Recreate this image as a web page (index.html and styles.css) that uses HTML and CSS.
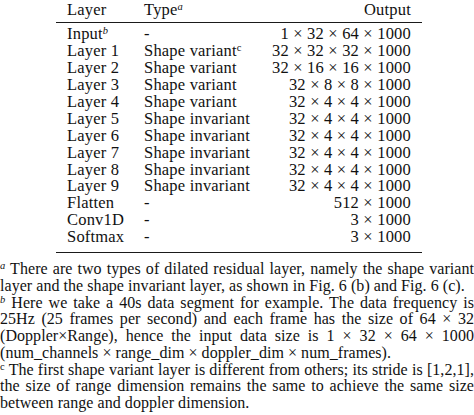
FILE: index.html
```html
<!DOCTYPE html>
<html>
<head>
<meta charset="utf-8">
<link rel="stylesheet" href="styles.css">
</head>
<body>
<div class="page">
  <div class="tbl">
    <div class="row head">
      <span class="c1">Layer</span>
      <span class="c2">Type<sup class="s">a</sup></span>
      <span class="c3">Output</span>
    </div>
    <div class="body">
      <div class="row"><span class="c1">Input<sup class="s">b</sup></span><span class="c2">-</span><span class="c3">1 × 32 × 64 × 1000</span></div>
      <div class="row"><span class="c1">Layer 1</span><span class="c2">Shape variant<sup class="s u">c</sup></span><span class="c3">32 × 32 × 32 × 1000</span></div>
      <div class="row"><span class="c1">Layer 2</span><span class="c2">Shape variant</span><span class="c3">32 × 16 × 16 × 1000</span></div>
      <div class="row"><span class="c1">Layer 3</span><span class="c2">Shape variant</span><span class="c3">32 × 8 × 8 × 1000</span></div>
      <div class="row"><span class="c1">Layer 4</span><span class="c2">Shape variant</span><span class="c3">32 × 4 × 4 × 1000</span></div>
      <div class="row"><span class="c1">Layer 5</span><span class="c2">Shape invariant</span><span class="c3">32 × 4 × 4 × 1000</span></div>
      <div class="row"><span class="c1">Layer 6</span><span class="c2">Shape invariant</span><span class="c3">32 × 4 × 4 × 1000</span></div>
      <div class="row"><span class="c1">Layer 7</span><span class="c2">Shape invariant</span><span class="c3">32 × 4 × 4 × 1000</span></div>
      <div class="row"><span class="c1">Layer 8</span><span class="c2">Shape invariant</span><span class="c3">32 × 4 × 4 × 1000</span></div>
      <div class="row"><span class="c1">Layer 9</span><span class="c2">Shape invariant</span><span class="c3">32 × 4 × 4 × 1000</span></div>
      <div class="row"><span class="c1">Flatten</span><span class="c2">-</span><span class="c3">512 × 1000</span></div>
      <div class="row"><span class="c1">Conv1D</span><span class="c2">-</span><span class="c3">3 × 1000</span></div>
      <div class="row"><span class="c1">Softmax</span><span class="c2">-</span><span class="c3">3 × 1000</span></div>
    </div>
  </div>
  <div class="notes">
    <span class="ln j"><sup class="s">a</sup> There are two types of dilated residual layer, namely the shape variant</span>
    <span class="ln">layer and the shape invariant layer, as shown in Fig. 6 (b) and Fig. 6 (c).</span>
    <span class="ln j"><sup class="s">b</sup> Here we take a 40s data segment for example. The data frequency is</span>
    <span class="ln j">25Hz (25 frames per second) and each frame has the size of 64 × 32</span>
    <span class="ln j">(Doppler×Range), hence the input data size is 1 × 32 × 64 × 1000</span>
    <span class="ln">(num_channels × range_dim × doppler_dim × num_frames).</span>
    <span class="ln j"><sup class="s u">c</sup> The first shape variant layer is different from others; its stride is [1,2,1],</span>
    <span class="ln j">the size of range dimension remains the same to achieve the same size</span>
    <span class="ln">between range and doppler dimension.</span>
  </div>
</div>
</body>
</html>
```
FILE: styles.css
```css
html, body {
  margin: 0;
  padding: 0;
  background: #ffffff;
}
body {
  width: 474px;
  height: 415px;
  overflow: hidden;
  font-family: "Liberation Serif", "Times New Roman", serif;
  font-size: 16.5px;
  letter-spacing: 0.2px;
  color: #111111;
}
.page {
  display: flex;
  flex-direction: column;
}
.tbl {
  margin-left: 56px;
  width: 366px;
  border-bottom: 1.4px solid #1a1a1a;
  padding-bottom: 6px;
}
.row {
  display: grid;
  grid-template-columns: 77px 1fr auto;
  padding: 0 11px;
  line-height: 16.9px;
  height: 16.9px;
  white-space: nowrap;
}
.head {
  padding-top: 1.6px;
  padding-bottom: 3.6px;
  border-bottom: 1.4px solid #1a1a1a;
}
.body {
  padding-top: 3.4px;
}
.c3 {
  text-align: right;
}
.s {
  font-style: italic;
  font-size: 10.5px;
  line-height: 0;
  vertical-align: 5px;
}
.s.u {
  font-style: normal;
}
.notes {
  margin-top: 8px;
  width: 474px;
  display: flex;
  flex-direction: column;
  font-size: 16px;
  letter-spacing: 0.05px;
}
.ln {
  display: block;
  line-height: 16.75px;
  height: 16.75px;
  white-space: nowrap;
}
.ln.j {
  white-space: normal;
  text-align: justify;
  text-align-last: justify;
}
```
